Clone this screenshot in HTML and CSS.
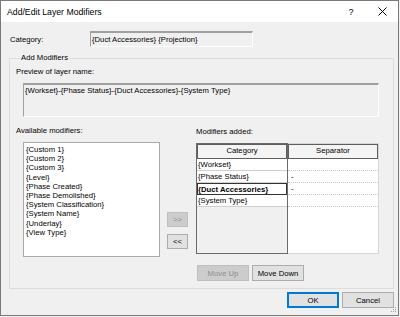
FILE: index.html
```html
<!DOCTYPE html>
<html lang="en">
<head>
  <meta charset="UTF-8" />
  <title>Add/Edit Layer Modifiers</title>
  <link rel="stylesheet" href="styles.css">
</head>
<body>
  <div class="dialog">
    <div class="titlebar">
      <span class="title">Add/Edit Layer Modifiers</span>
      <span class="help">?</span>
      <span class="close">
        <svg width="9" height="9" viewBox="0 0 9 9"><path d="M0.5 0.5 L8.5 8.5 M8.5 0.5 L0.5 8.5" stroke="#000" stroke-width="1"/></svg>
      </span>
    </div>

    <div class="content">
      <div class="category-row">
        <span class="category-label">Category:</span>
        <div class="field">{Duct Accessories} {Projection}</div>
      </div>

      <fieldset class="group">
        <legend>Add Modifiers</legend>
        <div class="preview-label">Preview of layer name:</div>
        <div class="preview">{Workset}-{Phase Status}-{Duct Accessories}-{System Type}</div>

        <div class="lists">
          <div class="col-available">
            <div class="col-label">Available modifiers:</div>
            <ul class="listbox">
              <li>{Custom 1}</li>
              <li>{Custom 2}</li>
              <li>{Custom 3}</li>
              <li>{Level}</li>
              <li>{Phase Created}</li>
              <li>{Phase Demolished}</li>
              <li>{System Classification}</li>
              <li>{System Name}</li>
              <li>{Underlay}</li>
              <li>{View Type}</li>
            </ul>
          </div>

          <div class="col-move">
            <button class="btn small disabled">&gt;&gt;</button>
            <button class="btn small">&lt;&lt;</button>
          </div>

          <div class="col-added">
            <div class="col-label">Modifiers added:</div>
            <div class="grid">
              <div class="grid-col cat">
                <div class="head">Category</div>
                <div class="cell">{Workset}</div>
                <div class="cell">{Phase Status}</div>
                <div class="cell focus">{Duct Accessories}</div>
                <div class="cell">{System Type}</div>
              </div>
              <div class="grid-col sep">
                <div class="head">Separator</div>
                <div class="cell"></div>
                <div class="cell">-</div>
                <div class="cell">-</div>
                <div class="cell"></div>
              </div>
            </div>
            <div class="order-buttons">
              <button class="btn wide disabled">Move Up</button>
              <button class="btn wide">Move Down</button>
            </div>
          </div>
        </div>
      </fieldset>

      <div class="footer">
        <button class="btn wide default">OK</button>
        <button class="btn wide">Cancel</button>
      </div>
    </div>

    <svg class="grip" width="6" height="6" viewBox="0 0 6 6">
      <rect x="4" y="0" width="1" height="1" fill="#a0a0a0"/>
      <rect x="2" y="2" width="1" height="1" fill="#a0a0a0"/>
      <rect x="4" y="2" width="1" height="1" fill="#a0a0a0"/>
      <rect x="0" y="4" width="1" height="1" fill="#a0a0a0"/>
      <rect x="2" y="4" width="1" height="1" fill="#a0a0a0"/>
      <rect x="4" y="4" width="1" height="1" fill="#a0a0a0"/>
    </svg>
  </div>
</body>
</html>
```

FILE: styles.css
```css
* {
  box-sizing: border-box;
}

body {
  margin: 0;
  background: #f0f0f0;
  font-family: 'Liberation Sans', Arial, sans-serif;
  font-size: 7.7px;
  color: #000;
}

.dialog {
  position: relative;
  width: 399px;
  height: 316px;
  border: 1px solid #7a7a7a;
  background: #f0f0f0;
}

.titlebar {
  height: 21px;
  background: #fff;
  display: flex;
  align-items: center;
  padding-left: 6px;
}

.title {
  font-size: 8.7px;
  flex: 1;
}

.help {
  width: 30px;
  text-align: center;
  font-size: 9px;
}

.close {
  width: 32px;
  display: flex;
  justify-content: center;
}

.content {
  padding: 9px 5px 0 7px;
}

.category-row {
  display: flex;
  align-items: center;
  height: 16px;
}

.category-label {
  width: 82px;
  padding-left: 2px;
}

.field {
  width: 163px;
  height: 16px;
  line-height: 13px;
  padding-left: 1px;
  border-style: solid;
  border-width: 2px 1px 1px 1px;
  border-color: #a0a0a0 #fff #fff #a0a0a0;
  white-space: nowrap;
}

.group {
  margin: 6px 0 0 1px;
  padding: 0 0 7px 6px;
  width: 385px;
  border: 1px solid #dcdcdc;
}

.group legend {
  margin-left: 4px;
  padding: 0 1px;
  line-height: 10px;
}

.preview-label {
  margin-top: 4px;
  line-height: 10px;
}

.preview {
  margin: 6px 0 0 7px;
  width: 356px;
  height: 34px;
  padding: 1px 0 0 1px;
  line-height: 10px;
  border-style: solid;
  border-width: 2px 1px 1px 1px;
  border-color: #a0a0a0 #fff #fff #a0a0a0;
}

.lists {
  display: flex;
  margin-top: 9px;
}

.col-label {
  line-height: 10px;
}

.col-available {
  width: 151px;
}

.listbox {
  list-style: none;
  margin: 6px 0 0 7px;
  padding: 2px 0 0 2px;
  width: 137px;
  height: 115px;
  background: #fff;
  border: 1px solid #a9a9a9;
  line-height: 9.2px;
}

.col-move {
  width: 29px;
  display: flex;
  flex-direction: column;
  align-items: flex-start;
  gap: 7px;
  padding-top: 86px;
}

.col-added {
  width: 183px;
}

.col-added .col-label {
  margin-top: 1px;
}

.grid {
  display: grid;
  grid-template-columns: 92px 91px;
  height: 111px;
  margin-top: 6px;
}

.grid-col.cat {
  border: 1px solid #6a6a6a;
  background: #f0f0f0;
}

.grid-col.sep {
  border: 1px solid #d6d6d6;
  border-left: 0;
  background: #fff;
}

.head {
  height: 15px;
  line-height: 12px;
  text-align: center;
  background: #f4f4f4;
  border: 1px solid #5e5e5e;
}

.cell {
  height: 12px;
  line-height: 11px;
  padding-left: 1px;
  background: #fff;
  border-bottom: 1px solid #d0d0d0;
  white-space: nowrap;
}

.sep .cell {
  border-bottom: 1px dotted #c8c8c8;
  padding-left: 3px;
}

.cell.focus {
  font-weight: bold;
  border: 1px solid #333;
  padding-left: 0;
}

.btn {
  font-family: inherit;
  font-size: 7.7px;
  color: #000;
  background: #e1e1e1;
  border: 1px solid #adadad;
  padding: 0;
  height: 15px;
}

.btn.small {
  width: 21px;
}

.btn.wide {
  width: 52px;
  height: 16px;
}

.btn.disabled {
  background: #cccccc;
  border-color: #bfbfbf;
  color: #8c8c8c;
}

.btn.default {
  border-color: #0078d7;
  box-shadow: inset 0 0 0 1px #0078d7;
}

.order-buttons {
  display: flex;
  gap: 3px;
  margin: 11px 0 0 1px;
}

.footer {
  display: flex;
  justify-content: flex-end;
  gap: 3px;
  margin-top: 3px;
  width: 386px;
}

.grip {
  position: absolute;
  right: 1px;
  bottom: 2px;
}
```
